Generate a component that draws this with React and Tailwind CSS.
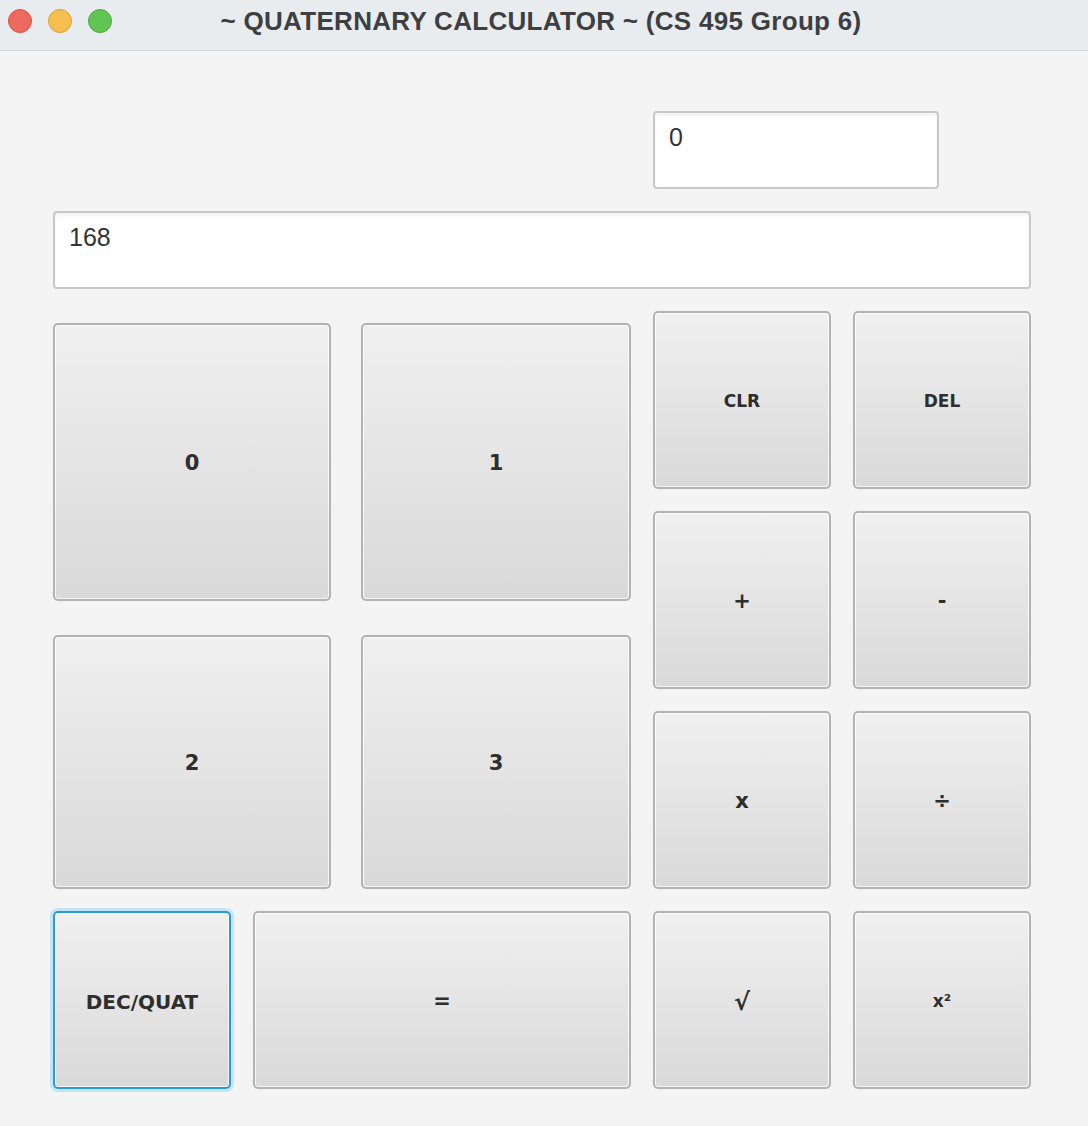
import React from 'react';

const btnBase =
  "flex items-center justify-center pt-[3px] rounded-[5px] bg-gradient-to-b from-[#f0f0f0] to-[#d9d9d9] shadow-[inset_0_0_0_1px_rgba(255,255,255,0.75)] text-[#2e2e2e] font-bold font-['DejaVu_Sans',sans-serif]";

const CalcButton = ({ label, className = '', size = 'text-[17px]', focused = false }) => (
  <button
    className={`${btnBase} ${size} ${className} ${
      focused
        ? 'border-2 border-[#2b9ad2] ring-[3px] ring-[#c4e5f6]'
        : 'border-2 border-[#b3b3b3]'
    }`}
  >
    {label}
  </button>
);

const Field = ({ value, className = '' }) => (
  <div
    className={`h-[78px] rounded-[4px] border-2 border-[#c8c8c8] bg-white shadow-[inset_0_3px_3px_rgba(0,0,0,0.05)] px-[14px] pt-[9px] text-[25px] leading-[30px] text-[#333] font-['Liberation_Sans',sans-serif] ${className}`}
  >
    {value}
  </div>
);

export default function App() {
  return (
    <div className="w-[1088px] h-[1126px] bg-[#f4f4f4] flex flex-col">
      {/* title bar */}
      <div className="relative h-[51px] shrink-0 bg-[#e9ecef] border-b border-[#d2d4d6] flex items-center justify-center">
        <div className="absolute left-[8px] top-[9px] flex gap-[16px]">
          <span className="w-[24px] h-[24px] rounded-full bg-[#ec6a5e] border border-[#d65446]" />
          <span className="w-[24px] h-[24px] rounded-full bg-[#f4bf4f] border border-[#d9a13a]" />
          <span className="w-[24px] h-[24px] rounded-full bg-[#61c554] border border-[#4ea83f]" />
        </div>
        <div className="text-[26px] font-bold text-[#3d3f42] font-['Liberation_Sans',sans-serif] tracking-[0.3px] -mt-[7px] ml-[-6px]">
          ~ QUATERNARY CALCULATOR ~ (CS 495 Group 6)
        </div>
      </div>

      {/* content */}
      <div className="pl-[53px] pr-[57px] pt-[60px] flex flex-col">
        <div className="flex pl-[600px]">
          <Field value="0" className="w-[286px]" />
        </div>
        <Field value="168" className="w-[978px] mt-[22px]" />

        <div className="flex gap-[22px] mt-[22px]">
          {/* left section */}
          <div className="w-[578px] flex flex-col pt-[12px]">
            <div className="grid grid-cols-[278px_270px] grid-rows-[278px_254px] gap-x-[30px] gap-y-[34px]">
              <CalcButton label="0" size="text-[21px]" />
              <CalcButton label="1" size="text-[21px]" />
              <CalcButton label="2" size="text-[21px]" />
              <CalcButton label="3" size="text-[21px]" />
            </div>
            <div className="flex gap-[22px] mt-[22px] h-[178px]">
              <CalcButton label="DEC/QUAT" size="text-[20px]" className="w-[178px]" focused />
              <CalcButton label="=" size="text-[21px]" className="w-[378px]" />
            </div>
          </div>

          {/* right grid */}
          <div className="grid grid-cols-[178px_178px] auto-rows-[178px] gap-[22px]">
            <CalcButton label="CLR" />
            <CalcButton label="DEL" />
            <CalcButton label="+" size="text-[21px]" />
            <CalcButton label="-" size="text-[21px]" />
            <CalcButton label="x" size="text-[21px]" />
            <CalcButton label="÷" size="text-[21px]" />
            <CalcButton label="√" size="text-[24px]" />
            <CalcButton label="x²" />
          </div>
        </div>
      </div>
    </div>
  );
}
